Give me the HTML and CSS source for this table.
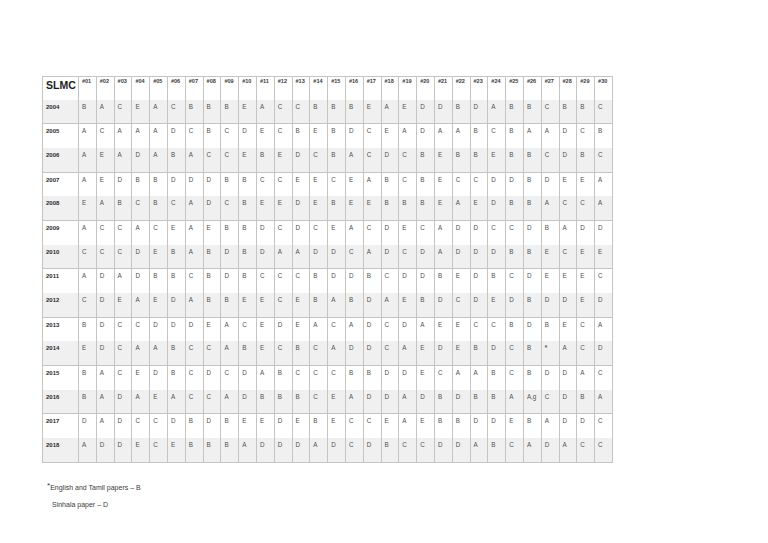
FILE: index.html
```html
<!DOCTYPE html>
<html>
<head>
<meta charset="utf-8">
<link rel="stylesheet" href="styles.css">
</head>
<body>
<div class="page">
<table class="grid">
<colgroup><col class="c-year"><col span="30" class="c-q"></colgroup>
<thead>
<tr class="head"><th class="slmc">SLMC</th><th>#01</th><th>#02</th><th>#03</th><th>#04</th><th>#05</th><th>#06</th><th>#07</th><th>#08</th><th>#09</th><th>#10</th><th>#11</th><th>#12</th><th>#13</th><th>#14</th><th>#15</th><th>#16</th><th>#17</th><th>#18</th><th>#19</th><th>#20</th><th>#21</th><th>#22</th><th>#23</th><th>#24</th><th>#25</th><th>#26</th><th>#27</th><th>#28</th><th>#29</th><th>#30</th></tr>
</thead>
<tbody>
<tr class="band"><th>2004</th><td>B</td><td>A</td><td>C</td><td>E</td><td>A</td><td>C</td><td>B</td><td>B</td><td>B</td><td>E</td><td>A</td><td>C</td><td>C</td><td>B</td><td>B</td><td>B</td><td>E</td><td>A</td><td>E</td><td>D</td><td>D</td><td>B</td><td>D</td><td>A</td><td>B</td><td>B</td><td>C</td><td>B</td><td>B</td><td>C</td></tr>
<tr><th>2005</th><td>A</td><td>C</td><td>A</td><td>A</td><td>A</td><td>D</td><td>C</td><td>B</td><td>C</td><td>D</td><td>E</td><td>C</td><td>B</td><td>E</td><td>B</td><td>D</td><td>C</td><td>E</td><td>A</td><td>D</td><td>A</td><td>A</td><td>B</td><td>C</td><td>B</td><td>A</td><td>A</td><td>D</td><td>C</td><td>B</td></tr>
<tr class="band"><th>2006</th><td>A</td><td>E</td><td>A</td><td>D</td><td>A</td><td>B</td><td>A</td><td>C</td><td>C</td><td>E</td><td>B</td><td>E</td><td>D</td><td>C</td><td>B</td><td>A</td><td>C</td><td>D</td><td>C</td><td>B</td><td>E</td><td>B</td><td>B</td><td>E</td><td>B</td><td>B</td><td>C</td><td>D</td><td>B</td><td>C</td></tr>
<tr><th>2007</th><td>A</td><td>E</td><td>D</td><td>B</td><td>B</td><td>D</td><td>D</td><td>D</td><td>B</td><td>B</td><td>C</td><td>C</td><td>E</td><td>E</td><td>C</td><td>E</td><td>A</td><td>B</td><td>C</td><td>B</td><td>E</td><td>C</td><td>C</td><td>D</td><td>D</td><td>B</td><td>D</td><td>E</td><td>E</td><td>A</td></tr>
<tr class="band"><th>2008</th><td>E</td><td>A</td><td>B</td><td>C</td><td>B</td><td>C</td><td>A</td><td>D</td><td>C</td><td>B</td><td>E</td><td>E</td><td>D</td><td>E</td><td>B</td><td>E</td><td>E</td><td>B</td><td>B</td><td>B</td><td>E</td><td>A</td><td>E</td><td>D</td><td>B</td><td>B</td><td>A</td><td>C</td><td>C</td><td>A</td></tr>
<tr><th>2009</th><td>A</td><td>C</td><td>C</td><td>A</td><td>C</td><td>E</td><td>A</td><td>E</td><td>B</td><td>B</td><td>D</td><td>C</td><td>D</td><td>C</td><td>E</td><td>A</td><td>C</td><td>D</td><td>E</td><td>C</td><td>A</td><td>D</td><td>D</td><td>C</td><td>C</td><td>D</td><td>B</td><td>A</td><td>D</td><td>D</td></tr>
<tr class="band"><th>2010</th><td>C</td><td>C</td><td>C</td><td>D</td><td>E</td><td>B</td><td>A</td><td>B</td><td>D</td><td>B</td><td>D</td><td>A</td><td>A</td><td>D</td><td>D</td><td>C</td><td>A</td><td>D</td><td>C</td><td>D</td><td>A</td><td>D</td><td>D</td><td>D</td><td>B</td><td>B</td><td>E</td><td>C</td><td>E</td><td>E</td></tr>
<tr><th>2011</th><td>A</td><td>D</td><td>A</td><td>D</td><td>B</td><td>B</td><td>C</td><td>B</td><td>D</td><td>B</td><td>C</td><td>C</td><td>C</td><td>B</td><td>D</td><td>D</td><td>B</td><td>C</td><td>D</td><td>D</td><td>B</td><td>E</td><td>D</td><td>B</td><td>C</td><td>D</td><td>E</td><td>E</td><td>E</td><td>C</td></tr>
<tr class="band"><th>2012</th><td>C</td><td>D</td><td>E</td><td>A</td><td>E</td><td>D</td><td>A</td><td>B</td><td>B</td><td>E</td><td>E</td><td>C</td><td>E</td><td>B</td><td>A</td><td>B</td><td>D</td><td>A</td><td>E</td><td>B</td><td>D</td><td>C</td><td>D</td><td>E</td><td>D</td><td>B</td><td>D</td><td>D</td><td>E</td><td>D</td></tr>
<tr><th>2013</th><td>B</td><td>D</td><td>C</td><td>C</td><td>D</td><td>D</td><td>D</td><td>E</td><td>A</td><td>C</td><td>E</td><td>D</td><td>E</td><td>A</td><td>C</td><td>A</td><td>D</td><td>C</td><td>D</td><td>A</td><td>E</td><td>E</td><td>C</td><td>C</td><td>B</td><td>D</td><td>B</td><td>E</td><td>C</td><td>A</td></tr>
<tr class="band"><th>2014</th><td>E</td><td>D</td><td>C</td><td>A</td><td>A</td><td>B</td><td>C</td><td>C</td><td>A</td><td>B</td><td>E</td><td>C</td><td>B</td><td>C</td><td>A</td><td>D</td><td>D</td><td>C</td><td>A</td><td>E</td><td>D</td><td>E</td><td>B</td><td>D</td><td>C</td><td>B</td><td class="star">*</td><td>A</td><td>C</td><td>D</td></tr>
<tr><th>2015</th><td>B</td><td>A</td><td>C</td><td>E</td><td>D</td><td>B</td><td>C</td><td>D</td><td>C</td><td>D</td><td>A</td><td>B</td><td>C</td><td>C</td><td>C</td><td>B</td><td>B</td><td>D</td><td>D</td><td>E</td><td>C</td><td>A</td><td>A</td><td>B</td><td>C</td><td>B</td><td>D</td><td>D</td><td>A</td><td>C</td></tr>
<tr class="band"><th>2016</th><td>B</td><td>A</td><td>D</td><td>A</td><td>E</td><td>A</td><td>C</td><td>C</td><td>A</td><td>D</td><td>B</td><td>B</td><td>B</td><td>C</td><td>E</td><td>A</td><td>D</td><td>D</td><td>A</td><td>D</td><td>B</td><td>D</td><td>B</td><td>B</td><td>A</td><td>A,g</td><td>C</td><td>D</td><td>B</td><td>A</td></tr>
<tr><th>2017</th><td>D</td><td>A</td><td>D</td><td>C</td><td>C</td><td>D</td><td>B</td><td>D</td><td>B</td><td>E</td><td>E</td><td>D</td><td>E</td><td>B</td><td>E</td><td>C</td><td>C</td><td>E</td><td>A</td><td>E</td><td>B</td><td>B</td><td>D</td><td>D</td><td>E</td><td>B</td><td>A</td><td>D</td><td>D</td><td>C</td></tr>
<tr class="band"><th>2018</th><td>A</td><td>D</td><td>D</td><td>E</td><td>C</td><td>E</td><td>B</td><td>B</td><td>B</td><td>A</td><td>D</td><td>D</td><td>D</td><td>A</td><td>D</td><td>C</td><td>D</td><td>B</td><td>C</td><td>C</td><td>D</td><td>D</td><td>A</td><td>B</td><td>C</td><td>A</td><td>D</td><td>A</td><td>C</td><td>C</td></tr>
</tbody>
</table>
<div class="notes">
<p class="note"><sup class="ast">*</sup>English and Tamil papers – B</p>
<p class="note indent">Sinhala paper – D</p>
</div>
</div>
</body>
</html>
```
FILE: styles.css
```css
html, body {
  margin: 0;
  padding: 0;
  background: #ffffff;
}
body {
  font-family: "Liberation Sans", Arial, sans-serif;
  color: #404040;
}
.page {
  padding: 76px 0 0 42px;
}
.grid {
  border-collapse: collapse;
  table-layout: fixed;
  width: 570px;
  border: 1px solid #c4c4c4;
}
.c-year { width: 36px; }
.c-q { width: 17.8px; }
.grid th, .grid td {
  border-left: 1px solid #c4c4c4;
  border-right: 1px solid #c4c4c4;
  padding: 0 0 0 3px;
  text-align: left;
  vertical-align: top;
  overflow: hidden;
  white-space: nowrap;
}
.grid td {
  font-size: 6.3px;
  line-height: 8px;
  padding-top: 3px;
  color: #505050;
}
.grid tbody th {
  font-size: 6px;
  line-height: 8px;
  padding-top: 3px;
  font-weight: bold;
  color: #2a2a2a;
}
.head {
  height: 23px;
}
.head th {
  font-size: 5.5px;
  line-height: 7px;
  padding-top: 1px;
  font-weight: bold;
  color: #3a3a3a;
}
.head th.slmc {
  font-size: 10.5px;
  line-height: 12px;
  padding-top: 2px;
  color: #1e1e1e;
}
tbody tr {
  height: 24.2px;
}
tbody tr.band {
  background: #f0f0f0;
  border-bottom: 1px solid #c4c4c4;
}
.star {
  font-weight: bold;
  text-align: center;
}
.notes {
  padding: 20px 0 0 8px;
}
.note {
  margin: 0 0 8px 0;
  font-size: 7px;
  line-height: 9px;
  color: #3a3a3a;
}
.ast {
  font-size: 8px;
  line-height: 0;
  vertical-align: 2px;
  margin-left: -3px;
}
.indent {
  padding-left: 2px;
}
```
